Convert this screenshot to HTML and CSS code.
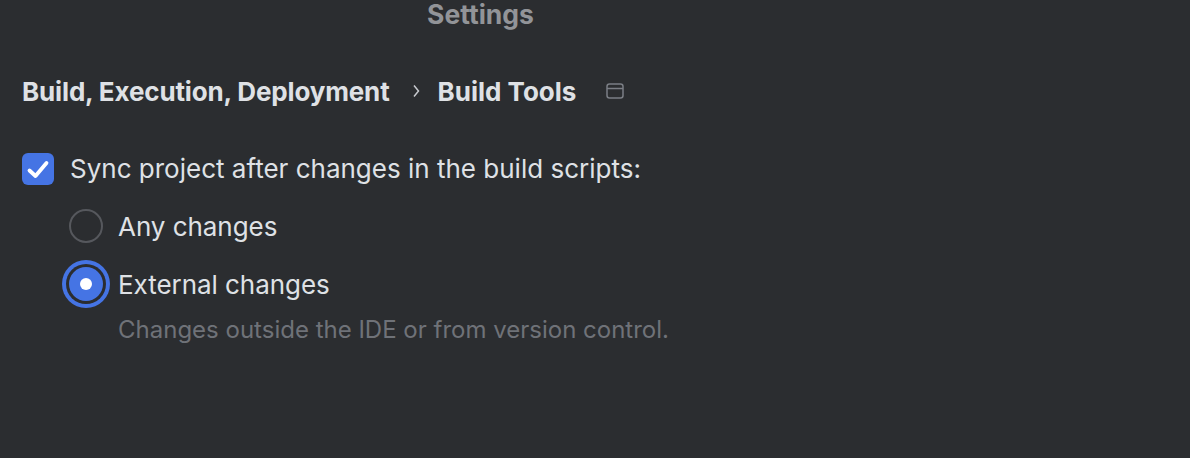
FILE: index.html
```html
<!DOCTYPE html>
<html lang="en">
<head>
  <meta charset="UTF-8">
  <title>Settings</title>
  <link rel="stylesheet" href="styles.css">
</head>
<body>
  <div class="title">Settings</div>

  <div class="crumbs">
    <span class="crumb-first">Build, Execution, Deployment</span>
    <svg class="chevron" width="8" height="14" viewBox="0 0 8 14"><path d="M2 1.5l4.5 5.5-4.5 5.5" fill="none" stroke="#c8cacf" stroke-width="1.5"/></svg>
    <span>Build Tools</span>
    <svg class="window-icon" width="18" height="18" viewBox="0 0 18 18"><rect x="1" y="2" width="16" height="14" rx="2.5" fill="none" stroke="#7b7e85" stroke-width="1.5"/><path d="M1 6.5h16" stroke="#7b7e85" stroke-width="1.5"/></svg>
  </div>

  <div class="options">
    <div class="check-row">
      <span class="checkbox">
        <svg width="32" height="32" viewBox="0 0 32 32"><path d="M7.5 17.5l6 5.5 11-13" fill="none" stroke="#fff" stroke-width="3.8" stroke-linecap="round" stroke-linejoin="round"/></svg>
      </span>
      <span class="check-label">Sync project after changes in the build scripts:</span>
    </div>

    <div class="radio-row">
      <span class="radio"></span>
      <span class="radio-label">Any changes</span>
    </div>

    <div class="radio-row">
      <span class="radio selected"><span class="dot"></span></span>
      <span class="radio-label">External changes</span>
    </div>

    <div class="hint">Changes outside the IDE or from version control.</div>
  </div>
</body>
</html>
```

FILE: styles.css
```css
body {
  margin: 0;
  height: 458px;
  overflow: hidden;
  background-color: #2b2d30;
  font-family: Inter, "Liberation Sans", sans-serif;
  color: #dfe1e5;
}
.title {
  height: 30px;
  line-height: 28px;
  text-align: center;
  width: 961px;
  font-size: 26.5px;
  font-weight: 700;
  color: #929498;
}
.crumbs {
  display: flex;
  align-items: center;
  height: 32px;
  margin-top: 45px;
  padding-left: 22px;
  font-size: 26px;
  font-weight: 700;
}
.crumb-first {
  letter-spacing: -0.15px;
}
.chevron {
  margin: 0 18px 0 22px;
}
.window-icon {
  margin-left: 30px;
}
.options {
  margin-top: 46px;
  padding-left: 22px;
  font-size: 26px;
}
.check-row {
  display: flex;
  align-items: center;
  gap: 16px;
  height: 32px;
}
.check-label {
  margin-top: -2px;
}
.checkbox {
  width: 32px;
  height: 32px;
  border-radius: 6px;
  background-color: #4574e4;
  display: flex;
  align-items: center;
  justify-content: center;
}
.radio-row {
  display: flex;
  align-items: center;
  gap: 15px;
  height: 34px;
  margin-top: 24px;
  margin-left: 47px;
}
.radio-label {
  letter-spacing: -0.05px;
}
.radio {
  width: 34px;
  height: 34px;
  box-sizing: border-box;
  border: 2px solid #56585d;
  border-radius: 50%;
  display: flex;
  align-items: center;
  justify-content: center;
}
.radio.selected {
  border: none;
  background-color: #4574e4;
  box-shadow: 0 0 0 3px #2b2d30, 0 0 0 7px #4574e4;
}
.dot {
  width: 12px;
  height: 12px;
  border-radius: 50%;
  background-color: #fff;
}
.hint {
  margin-top: 14px;
  margin-left: 96px;
  font-size: 24px;
  color: #6f7278;
}
```
